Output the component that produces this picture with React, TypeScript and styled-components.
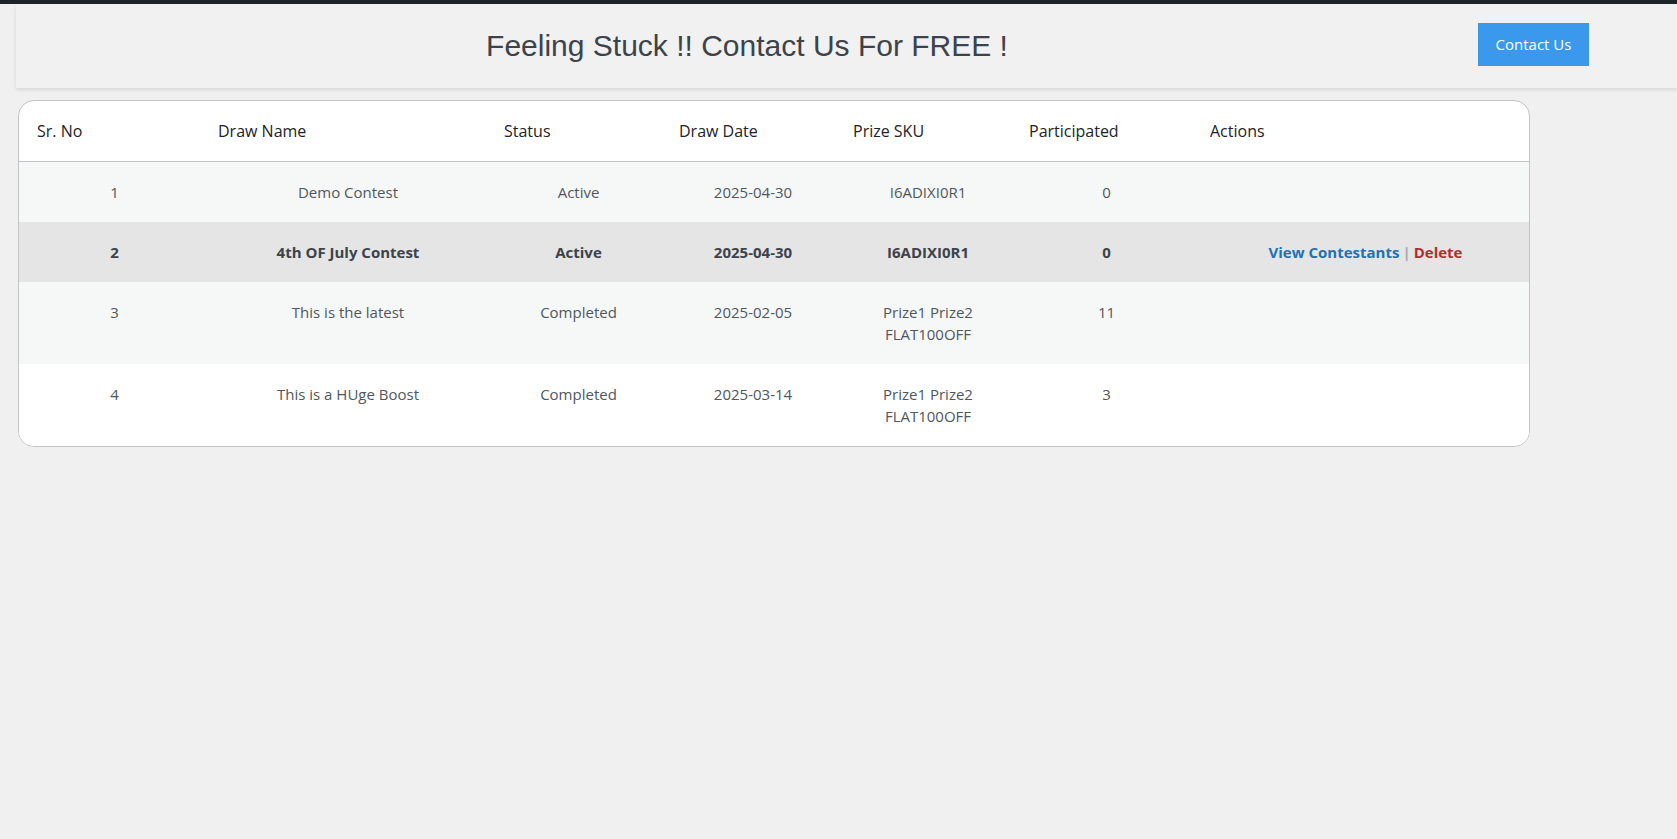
import styled, { createGlobalStyle } from "styled-components";

const GlobalStyle = createGlobalStyle`
  html, body {
    margin: 0;
    padding: 0;
    background: #f0f0f1;
  }
  body {
    font-family: "Segoe UI", "Open Sans", "Noto Sans", sans-serif;
    color: #3c434a;
  }
`;

const AdminStrip = styled.div`
  height: 4px;
  background: #1d2327;
`;

const Page = styled.div`
  padding: 0 0 0 16px;
  min-height: 835px;
`;

const Banner = styled.header`
  display: flex;
  align-items: center;
  height: 84px;
  padding-right: 88px;
  background: #f1f1f1;
  box-shadow: 0 2px 4px rgba(0, 0, 0, 0.1);
`;

const BannerTitle = styled.h2`
  flex: 1;
  margin: 0;
  text-align: center;
  font-family: "Liberation Sans", Arial, sans-serif;
  font-size: 30px;
  font-weight: 400;
  color: #3c434a;
`;

const ContactButton = styled.button`
  width: 111px;
  height: 43px;
  margin-top: -4px;
  border: none;
  border-radius: 0;
  background: #3a99ec;
  color: #fff;
  font-family: "Segoe UI", "Open Sans", sans-serif;
  font-size: 15px;
  cursor: pointer;
`;

const Card = styled.div`
  width: 1510px;
  margin: 12px 0 0 2px;
  background: #fff;
  border: 1px solid #c3c4c7;
  border-radius: 16px;
  overflow: hidden;
`;

const Table = styled.table`
  width: 100%;
  border-collapse: collapse;
  table-layout: fixed;
`;

const Th = styled.th`
  padding: 19px 14px 19px 18px;
  line-height: 22px;
  text-align: left;
  font-size: 16px;
  font-weight: 400;
  color: #1d2327;
  border-bottom: 1px solid #c3c4c7;
`;

const Row = styled.tr<{ $bg: string; $bold?: boolean }>`
  background: ${(p) => p.$bg};
  font-weight: ${(p) => (p.$bold ? 700 : 400)};
`;

const Td = styled.td`
  padding: 19px 11px 19px 21px;
  line-height: 22px;
  text-align: center;
  vertical-align: top;
  font-size: 15px;
  color: #50575e;
`;

const Bold = styled.span`
  color: #3c434a;
`;

const ActionLink = styled.a<{ $tone: "blue" | "red" }>`
  color: ${(p) => (p.$tone === "blue" ? "#2271b1" : "#b32d2e")};
  text-decoration: none;
  font-weight: 700;
`;

const Sep = styled.span`
  color: #a7aaad;
  margin: 0 3px;
`;

const widths = [181, 286, 175, 174, 176, 181, undefined];
const heads = ["Sr. No", "Draw Name", "Status", "Draw Date", "Prize SKU", "Participated", "Actions"];

interface IDraw {
  id: number;
  name: string;
  status: string;
  date: string;
  sku: string[];
  participated: number;
}

const draws: IDraw[] = [
  { id: 1, name: "Demo Contest", status: "Active", date: "2025-04-30", sku: ["I6ADIXI0R1"], participated: 0 },
  { id: 2, name: "4th OF July Contest", status: "Active", date: "2025-04-30", sku: ["I6ADIXI0R1"], participated: 0 },
  { id: 3, name: "This is the latest", status: "Completed", date: "2025-02-05", sku: ["Prize1 Prize2", "FLAT100OFF"], participated: 11 },
  { id: 4, name: "This is a HUge Boost", status: "Completed", date: "2025-03-14", sku: ["Prize1 Prize2", "FLAT100OFF"], participated: 3 },
];

const rowBg = ["#f6f7f7", "#e5e5e5", "#f6f7f7", "#ffffff"];

function App() {
  return (
    <>
      <GlobalStyle />
      <AdminStrip />
      <Page>
        <Banner>
          <BannerTitle>Feeling Stuck !! Contact Us For FREE !</BannerTitle>
          <ContactButton>Contact Us</ContactButton>
        </Banner>
        <Card>
          <Table>
            <colgroup>
              {widths.map((w, i) => (
                <col key={i} style={w ? { width: w } : undefined} />
              ))}
            </colgroup>
            <thead>
              <tr>
                {heads.map((h) => (
                  <Th key={h}>{h}</Th>
                ))}
              </tr>
            </thead>
            <tbody>
              {draws.map((d, i) => {
                const hovered = d.id === 2;
                const cells = [
                  d.id,
                  d.name,
                  d.status,
                  d.date,
                  d.sku.map((s, k) => <div key={k}>{s}</div>),
                  d.participated,
                ];
                return (
                  <Row key={d.id} $bg={rowBg[i]} $bold={hovered}>
                    {cells.map((c, k) => (
                      <Td key={k}>{hovered ? <Bold>{c}</Bold> : c}</Td>
                    ))}
                    <Td>
                      {hovered && (
                        <>
                          <ActionLink $tone="blue" href="#">
                            View Contestants
                          </ActionLink>
                          <Sep>|</Sep>
                          <ActionLink $tone="red" href="#">
                            Delete
                          </ActionLink>
                        </>
                      )}
                    </Td>
                  </Row>
                );
              })}
            </tbody>
          </Table>
        </Card>
      </Page>
    </>
  );
}

export default App;
